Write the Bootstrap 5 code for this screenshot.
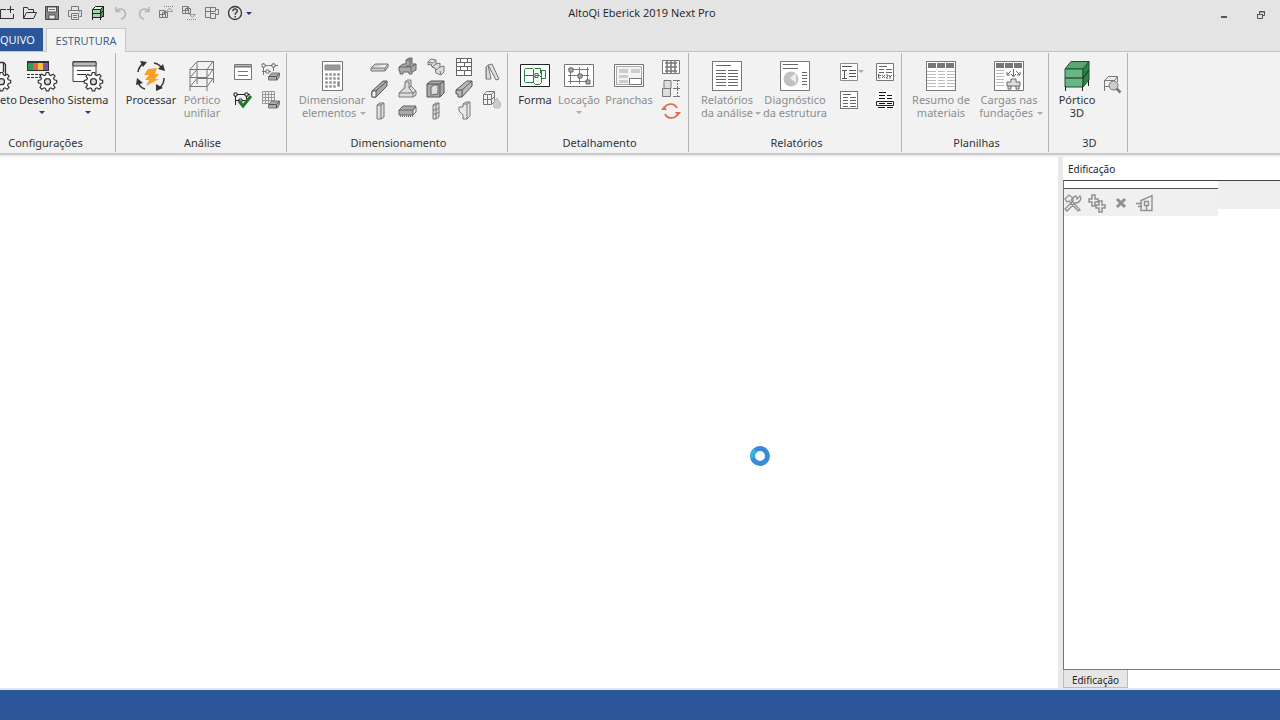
<!DOCTYPE html>
<html lang="pt-BR">
<head>
<meta charset="utf-8">
<meta name="viewport" content="width=device-width, initial-scale=1">
<title>AltoQi Eberick 2019 Next Pro</title>
<link href="https://cdn.jsdelivr.net/npm/bootstrap@5.3.0/dist/css/bootstrap.min.css" rel="stylesheet">
<style>
body{font:11px/13px "Noto Sans","Open Sans",sans-serif;color:#333;background:#fff}
button{background:none;border:0;padding:0;color:inherit;font:inherit}
svg{display:block;fill:none;stroke:currentColor;stroke-width:1}
.app-head{background:#e4e4e4}
.title-row{height:28px;color:#333}
.app-title{top:6px;padding-left:4px;font:11px/14px "Open Sans",sans-serif;color:#222}
.quick{gap:7px;margin-left:-2px;padding-top:5px}
.quick button,.quick svg{width:16px;height:16px}
.quick .caret-btn{width:8px;margin-left:-5px}
.win-tools{gap:22px;padding:4px 12px 0 0}
.tab-row{height:24px;font:11px/22px "Open Sans",sans-serif;border-bottom:1px solid #c4c4c4}
.tab-file{background:#2b579a;color:#fff;width:43px;text-align:left}
.tab-on{background:#f3f3f3;color:#3e5688;width:80px;height:24px;margin-left:3px;border:1px solid #c8c8c8;border-bottom:0}
.ribbon{background:#f2f2f2;height:103px;border-bottom:2px solid #cacaca;padding-top:1px}
.rgroup{height:99px;border-right:1px solid #b4b4b4;flex:none}
.rbody{height:83px;padding-top:5px;display:flex;align-items:flex-start}
.rlabel{text-align:center;line-height:14px;padding-left:3px;color:#333}
.g-cfg{width:116px}
.g-cfg .rlabel{padding-right:27px}
.g-ana{width:171px}.g-ana .rbody{padding-left:7px}
.g-dim{width:221px}.g-dim .rbody{padding-left:11px}
.g-det{width:181px}.g-det .rbody{padding-left:5px}
.g-rel{width:213px}.g-rel .rbody{padding-left:4px}
.g-pla{width:147px}.g-pla .rbody{padding-left:5px}
.g-3d{width:79px}.g-3d .rbody{padding-left:6px}
.big{padding-top:2px;color:#333;text-align:center;position:relative;display:flex;flex-direction:column;align-items:center;white-space:nowrap;flex:none}
.big svg{width:32px;height:32px;margin-bottom:1px}
.big:disabled,.tiny:disabled{color:#8d8d8d}
.w-a{width:46px}.w-b{width:56px}.w-c{width:68px}.w-d{width:44px}
.w-cut{width:19px;align-items:flex-start}
.w-cut svg{width:16px}
.caret{width:0;height:0;border:3px solid transparent;border-top-color:#233a70;border-bottom:0;display:block;margin:5px auto 0}
:disabled .caret{border-top-color:#aaa}
.caret.side{position:absolute;right:0;bottom:4px;margin:0}
.stack2,.stack3{display:grid;align-content:start;grid-auto-flow:column;grid-auto-columns:28px;flex:none}
.stack2{grid-template-rows:28px 28px}
.stack3{grid-template-rows:22px 22px 22px;margin-top:-2px}
.rel-tools{margin-left:6px;column-gap:8px}
.tiny{display:flex;align-items:center;justify-content:center;position:relative;color:#777}
.tiny svg{width:20px;height:20px}
.tiny .caret{position:absolute;right:-1px;top:12px;margin:0}
.crisp{shape-rendering:crispEdges}
.work{border-top:2px solid #eee;border-bottom:2px solid #e2e4ea}
.canvas-area{background:#fff}
.side-panel{width:222px;border-left:5px solid #e9e9e9;font:10px/14px "Noto Sans",sans-serif;color:#222}
.side-title{padding:5px 5px 4px}
.side-body{border:1px solid #777;border-top-color:#444;border-right:0}
.side-tools{width:154px;border-top:1px solid #555;margin-top:7px;height:28px;background:#f0f0f0;color:#909090;gap:4px}
.side-tools button,.side-tools svg{width:20px;height:20px}
.side-rest{height:28px;background:#efefef}
.side-tab{background:#e6e6e6;border:1px solid #bbb;border-top:0;width:65px;height:18px;padding-top:3px;color:#222}
.foot{background:#2b579a;height:30px}
.busy{left:58.6%;top:54.2%;width:22px;height:22px}
</style>
</head>
<body>
<div class="vh-100 d-flex flex-column overflow-hidden">
<header class="app-head">
<div class="title-row d-flex justify-content-between position-relative">
<div class="quick d-flex">
<button aria-label="Novo"><svg viewBox="0 0 16 16"><path d="M2.500 13V4.500H8M15.500 9v4.500H2M12.500 1v7M9 4.500h7" stroke="#333"/></svg></button>
<button aria-label="Abrir"><svg viewBox="0 0 16 16"><path d="M2.500 13.500v-11h4l1 2h5v3M2.500 13.500l3-6h10l-3 6z" stroke="#333"/></svg></button>
<button aria-label="Salvar"><svg viewBox="0 0 16 16"><path d="M1.500 1.500h13v13h-13z" stroke="#444" fill="#888"/><path d="M3.500 2h9v5h-9zM5 10h6v4H5z" fill="#eee" stroke="#555"/><path d="M5 4.500h6" stroke="#777"/></svg></button>
<button aria-label="Imprimir"><svg viewBox="0 0 16 16"><path d="M4.500 5V1.500h7V5M3.500 11.500h-2v-6h13v6h-2M4.500 8.500h7v6h-7zM6 10.500h4M6 12.500h4M12 7h1" stroke="#777"/></svg></button>
<button aria-label="Pórtico 3D"><svg viewBox="0 0 16 16"><path d="M2.500 4.500l3-3h8l-3 3z" fill="#d8f0d8" stroke="#222"/><path d="M2.500 4.500h8v8h-8z" fill="#a5d6a9" stroke="#222"/><path d="M10.500 4.500l3-3v9l-3 3z" fill="#57965f" stroke="#222"/><path d="M2.500 8.500h8l3-3M2.500 12v3M10.500 12v3M13.500 10v2" stroke="#222"/></svg></button>
<button aria-label="Desfazer" disabled><svg viewBox="0 0 16 16"><path d="M3 2v4.500h4.500M3.500 6a5 5 0 1 1 4.500 8" stroke="#b4b4b4" stroke-width="1.600"/></svg></button>
<button aria-label="Refazer" disabled><svg viewBox="0 0 16 16"><path d="M13 2v4.500H8.500M12.500 6A5 5 0 1 0 8 14" stroke="#b4b4b4" stroke-width="1.600"/></svg></button>
<button aria-label="Pavimento acima"><svg viewBox="0 0 16 16"><path d="M.5 5.500h5v4h-5zM3.500 7.500h5v5h-5zM.5 9.500v3h3M6.500 5.500v7" stroke="#777"/><path d="M7.500 6.500h6L10.500 3z" stroke="#999"/><path d="M5 1.500h9" stroke="#888" stroke-dasharray="1 1"/></svg></button>
<button aria-label="Pavimento abaixo"><svg viewBox="0 0 16 16"><path d="M.5 1.500h5v4h-5zM3.500 3.500h5v5h-5zM.5 5.500v3h3M6.500 1.500v7" stroke="#777"/><path d="M7.500 9.500h6L10.500 12.500z" stroke="#999"/><path d="M5 14.500h9" stroke="#888" stroke-dasharray="1 1"/></svg></button>
<button aria-label="Croqui"><svg viewBox="0 0 16 16"><path d="M.5 2.500h5v4h-5zM5.500 2.500h5v4h-5zM.5 6.500h5v6h-5zM5.500 8.500h5v5h-5zM10.500 4.500h3v5h-3" stroke="#777"/></svg></button>
<button aria-label="Ajuda"><svg viewBox="0 0 16 16"><circle cx="7" cy="8" r="6.500" stroke="#333" stroke-width="1.300"/><path d="M5 6.200c0-3 4.300-3 4.300-.2C9.300 7.600 7.200 7.600 7.200 9.700M7.200 11v1.400" stroke="#333" stroke-width="1.400"/></svg></button>
<button class="caret-btn" aria-label="Personalizar"><span class="caret m-0"></span></button>
</div>
<div class="app-title position-absolute start-0 end-0 text-center">AltoQi Eberick 2019 Next Pro</div>
<div class="win-tools d-flex">
<button aria-label="Minimizar"><svg width="16" height="16" viewBox="0 0 16 16"><path d="M5 9h6" stroke="#555" stroke-width="2"/></svg></button>
<button aria-label="Restaurar"><svg width="14" height="16" viewBox="0 0 14 16"><path d="M3.500 6.500h5v4h-5zM5.500 6V3.500h5v4H9M3 6.500h6M5 4h6" stroke="#555"/></svg></button>
</div>
</div>
<nav class="tab-row d-flex"><button class="tab-file" aria-label="Arquivo">QUIVO</button><button class="tab-on">ESTRUTURA</button></nav>
</header>

<section class="ribbon d-flex" aria-label="Estrutura">
<div class="rgroup g-cfg"><div class="rbody">
<button class="big w-cut" aria-label="Projeto"><svg viewBox="16 0 16 32"><path d="M16 2.500h3.500l2 2V15M19.500 3v9" stroke="#333" stroke-width="1.300"/><use href="#gear" x="-4"/></svg>eto</button>
<button class="big w-a"><svg viewBox="0 0 32 32">
<path d="M1 1h22v10H1z" fill="#333" stroke="none"/><path d="M2 3h5v7H2z" fill="#2c9a61" stroke="none"/><path d="M7 3h5v7H7z" fill="#e76337" stroke="none"/><path d="M12 3h5v7h-5z" fill="#f2c43d" stroke="none"/><path d="M17 3h5v7h-5z" fill="#864ea0" stroke="none"/><path d="M1 14.500h15M1 17.500h13" stroke="#333" stroke-dasharray="3 1"/>
<g id="gear"><path d="M19.500 15l.8-2.500h2.400l.8 2.500 1.500.6 2.200-1.400 1.800 1.800-1.400 2.200.6 1.500 2.500.8v2.400l-2.500.8-.6 1.500 1.400 2.200-1.800 1.800-2.200-1.400-1.500.6-.8 2.500h-2.400l-.8-2.500-1.500-.6-2.200 1.400-1.800-1.800 1.400-2.200-.6-1.500-2.500-.8v-2.400l2.500-.8.6-1.500-1.400-2.200 1.800-1.800 2.200 1.400z" fill="#fff" stroke="#333" stroke-width="1.200"/><circle cx="21.500" cy="21.700" r="3" fill="#ddd" stroke="#333" stroke-width="1.300"/></g></svg>Desenho<span class="caret"></span></button>
<button class="big w-a"><svg viewBox="0 0 32 32"><path d="M1 1.500h23v20H1z" fill="#fff" stroke="#444"/><path d="M1 2h23v4H1z" fill="#bbb" stroke="#444"/><path d="M5 10.500h14M5 14.500h9" stroke="#333"/><use href="#gear"/></svg>Sistema<span class="caret"></span></button>
</div><div class="rlabel">Configurações</div></div>

<div class="rgroup g-ana"><div class="rbody">
<button class="big w-b"><svg viewBox="0 0 32 32"><path d="M13 9l9-1-2 6h4l-4 5h4l-13 7 3-6H10l4-5H9z" fill="#f8a126" stroke="none"/><path d="M3 12q1-6 6-9M19 3q6 1 8 6M29 18q0 7-5 10M10 29q-5-1-7-7" stroke="#333" stroke-width="1.500"/><path d="M5 1l7 1-4 5zM28 4l2 7-7-2zM21 24v7l7-3zM1 25l1-7 6 5z" fill="#333" stroke="none"/></svg>Processar</button>
<button class="big w-a" disabled><svg viewBox="0 0 32 32"><path d="M4 9.500h17l6-8H11zM4 9v22M21 9v22M27.500 1v22M11 2v22M4 17.500h17l6-8H11zM4 26.500h17l6-8H11z" stroke="#777"/></svg>Pórtico<br>unifilar</button>
<div class="stack2 ms-1">
<button class="tiny" aria-label="Janela de análise"><svg viewBox="0 0 20 20"><path d="M1.500 2.500h17v15h-17z" fill="#fff"/><path d="M2 4.500h16" stroke-width="2"/><path d="M5 9.500h10M5 13.500h10"/></svg></button>
<button class="tiny" aria-label="Verificar lançamento"><svg viewBox="0 0 20 20"><path d="M2.500 3v12M13.500 3v7M2 4.500h15M2 10.500h12" stroke="#222"/><path d="M1 3h3v3H1zM12 3h3v3h-3zM6 9h3v3H6z" fill="#fff" stroke="#222"/><path d="M6 11l4 5 8-10" stroke="#20762a" stroke-width="3"/></svg></button>
<button class="tiny" aria-label="Apagar elementos"><svg viewBox="0 0 20 20"><path d="M2.500 1v12M12.500 1v8M1 3.500h16M1 9.500h9"/><path d="M1 2h3v3H1zM11 2h3v3h-3zM5 8h3v3H5z" fill="#fff"/><g id="er"><path d="M7.500 15l3-4h8v3l-2 4h-9z" fill="#aaa"/><path d="M7.500 14.500h8l3-3.500M15.500 15v3" stroke="#555"/></g></svg></button>
<button class="tiny" aria-label="Apagar grelha"><svg viewBox="0 0 20 20"><path d="M1.500 1.500h12v12h-12zM4.500 1v12M7.500 1v12M10.500 1v12M1 4.500h12M1 7.500h12M1 10.500h12" stroke="#999"/><use href="#er"/></svg></button>
</div></div><div class="rlabel">Análise</div></div>

<div class="rgroup g-dim"><div class="rbody">
<button class="big w-c" disabled><svg viewBox="0 0 32 32"><path d="M6.500 1.500h20v29h-20z" fill="#fff" stroke="#777"/><path d="M9 5h15v5H9z" fill="#999"/><path d="M9 13h3v3H9zM13 13h3v3h-3zM17 13h3v3h-3zM21 13h3v3h-3zM9 17h3v3H9zM13 17h3v3h-3zM17 17h3v3h-3zM21 17h3v3h-3zM9 21h3v3H9zM13 21h3v3h-3zM17 21h3v3h-3zM21 21h3v6h-3zM9 25h3v3H9zM13 25h3v3h-3zM17 25h3v3h-3z" fill="#888" stroke="#fff" stroke-width=".6"/></svg>Dimensionar<br><span>elementos &nbsp;</span><span class="caret side"></span></button>
<div class="stack3">
<button class="tiny" aria-label="Lajes"><svg viewBox="0 0 20 20"><path d="M1 11l4-4h13l-3 4zM1 11v3h14l3-4V7M15 11v3" fill="#ccc"/></svg></button>
<button class="tiny" aria-label="Vigas"><svg viewBox="0 0 20 20"><path d="M2 12L13 2h4v5L6 18H2z" fill="#aaa" stroke="#555"/><path d="M2 12h4v6H2z" fill="#fff" stroke="#555"/><path d="M6 12L17 2" stroke="#555"/></svg></button>
<button class="tiny" aria-label="Pilares"><svg viewBox="0 0 20 20"><path d="M7 4l3-2h4v14l-3 2H7zM7 4h4v14M11 4l3-2" fill="#ddd"/></svg></button>
<button class="tiny" aria-label="Blocos"><svg viewBox="0 0 20 20"><path d="M1 10l4-3h3V3l3-2h3v6h4v6l-4 2v2h-3v-2H5v2H2v-3H1zM1 10h12v5M13 10l5-3M8 3h4v6H8M12 3l2-2" fill="#aaa" stroke="#666"/></svg></button>
<button class="tiny" aria-label="Sapatas"><svg viewBox="0 0 20 20"><path d="M7 3l2-2h4v6l5 5v4l-3 2H1v-4l6-5zM7 3h4v6l4 5H1M15 14v4M11 9l2-2M15 14l3-2" fill="#ddd"/></svg></button>
<button class="tiny" aria-label="Radier"><svg viewBox="0 0 20 20"><path d="M1 9l4-4h13l-3 4v5H1z" fill="#aaa" stroke="#666"/><path d="M1 9h14l3-3v5l-3 3" stroke="#666"/><path d="M2 15h14" stroke="#777" stroke-width="2" stroke-dasharray="1 1"/></svg></button>
<button class="tiny" aria-label="Escadas"><svg viewBox="0 0 20 20"><path d="M2 5l3-3 5 1v4l4-1v4l4-1v6l-3 3-5-2-1-5-3-1-1-3-3 1zM2 5l5 1 3-3M6 10l4-3M10 13l4-3M15 18l-1-4" fill="#ddd"/></svg></button>
<button class="tiny" aria-label="Reservatórios"><svg viewBox="0 0 20 20"><path d="M1 5l4-3h13v12l-4 4H1z" fill="#aaa" stroke="#555"/><path d="M1 5h13v13M14 5l4-3" stroke="#555"/><path d="M5 16V8l3-2h4v9z" fill="#ddd" stroke="#666"/></svg></button>
<button class="tiny" aria-label="Pilar composto"><svg viewBox="0 0 20 20"><path d="M7 4l3-2h3v14l-3 2H7zM7 4h3v14M10 4l3-2M7 9h3l3-2M7 13h3l3-2" fill="#ddd"/></svg></button>
<button class="tiny" aria-label="Alvenaria"><svg viewBox="0 0 20 20" class="crisp"><path d="M2.500 1.500h15v17h-15zM3 5.500h14M3 9.500h14M3 13.500h14M6.500 2v3M13.500 2v3M10.500 6v3M6.500 10v3M13.500 10v3M10.500 14v4" fill="#fff" stroke="#666"/></svg></button>
<button class="tiny" aria-label="Vigas T"><svg viewBox="0 0 20 20"><path d="M2 11L13 2h5v5L8 18H4v-3H2zM2 11h6v7M8 11l10-9" fill="#bbb" stroke="#555"/></svg></button>
<button class="tiny" aria-label="Consolos"><svg viewBox="0 0 20 20"><path d="M9 3l3-2h4v14l-3 3H9v-4l-4-4V6h4zM9 3h4v15M13 3l3-2" fill="#e7e7e7"/></svg></button>
</div>
<div class="stack2">
<button class="tiny" aria-label="Rampa"><svg viewBox="0 0 20 20"><path d="M6 3l4-1 7 15-3 1L6 3zM4 17V5l2-2 3 14z" fill="#ddd"/><path d="M4.500 5v12" stroke-dasharray="1 1"/></svg></button>
<button class="tiny" aria-label="Incêndio"><svg viewBox="0 0 20 20"><path d="M1.500 4.500h8v10h-8zM1.500 9.500h8l3-3M5.500 4.500v10M1.500 4.500l3-3h8l-3 3M12.500 1.500v10l-3 3"/><path d="M15 8q6 7 2 10h-4q-4-3 2-10z" fill="#ccc" stroke="#bbb"/></svg></button>
</div></div><div class="rlabel">Dimensionamento</div></div>

<div class="rgroup g-det"><div class="rbody">
<button class="big w-d"><svg viewBox="0 0 32 32"><path d="M1.500 4.500h29v22h-29z" fill="#fff" stroke="#222"/><path d="M6.500 8.500h7l1 1v6h-9v-6zM15.500 8.500h6v5M5.500 15.500h9v7h-8l-1-1zM14.500 17.500l2-2h4l2 2v5l-2 2h-4l-2-2zM22.500 10.500h4v8h-4zM14.500 9.500v5M16 13.500h3v4h-3z" stroke="#23823a"/></svg>Forma</button>
<button class="big w-d" disabled><svg viewBox="0 0 32 32"><path d="M1.500 4.500h29v22h-29z" fill="#fff" stroke="#777"/><path d="M7.500 7v17M16.500 7v17M24.500 7v17M5 9.500h21M5 15.500h21M5 21.500h21" stroke="#777"/><path d="M6 8h4v4H6zM15 14h4v4h-4zM23 20h4v4h-4z" fill="#aaa" stroke="#666"/></svg>Locação<span class="caret"></span></button>
<button class="big w-b" disabled><svg viewBox="0 0 32 32"><path d="M1.500 4.500h29v22h-29z" fill="#fff" stroke="#777"/><path d="M3.500 6.500h25v18h-25z" fill="#f3f3f3" stroke="#aaa"/><path d="M6 9h9v4H6zM18 9h9v4h-9zM6 15h9v3H6zM6 20h9v3H6z" fill="#ccc" stroke="none"/><path d="M16.500 18.500h12v6h-12z" fill="#fff" stroke="#777"/></svg>Pranchas</button>
<div class="stack3">
<button class="tiny" aria-label="Armadura"><svg viewBox="0 0 20 20"><path d="M1.500 3.500h17v13h-17z" fill="#fff"/><path d="M4 6h12M4 10h12M4 14h12M6 4v12M10 4v12M14 4v12"/><path d="M5 5h2v2H5zM9 5h2v2H9zM13 5h2v2h-2zM5 9h2v2H5zM9 9h2v2H9zM13 9h2v2h-2zM5 13h2v2H5zM9 13h2v2H9zM13 13h2v2h-2z"/></svg></button>
<button class="tiny" aria-label="Cotas"><svg viewBox="0 0 20 20"><path d="M3 1.500h7v8H3zM1.500 9.500h8v8h-8z" fill="#ddd"/><path d="M12 1.500h7M12 9.500h7M12 17.500h7"/><path d="M16.500 1v17" stroke-dasharray="2 1"/></svg></button>
<button class="tiny" aria-label="Atualizar"><svg viewBox="0 0 20 20"><path d="M3 8a7 7 0 0 1 13-1M17 12a7 7 0 0 1-13 1" stroke="#dc7254" stroke-width="1.800"/><path d="M0 9h6L3 5zM14 11h6l-3 4z" fill="#dc7254" stroke="none"/></svg></button>
</div></div><div class="rlabel">Detalhamento</div></div>

<div class="rgroup g-rel"><div class="rbody">
<button class="big w-c" disabled><svg viewBox="0 0 32 32" class="crisp"><path d="M1.500 1.500h29v29h-29z" fill="#fff" stroke="#777"/><path d="M5 5.500h15M5 10.500h10M5 13.500h10M5 16.500h10M5 19.500h10M5 22.500h10M5 25.500h10M17 10.500h10M17 13.500h10M17 16.500h10M17 19.500h10M17 22.500h10M17 25.500h10" stroke="#666"/></svg>Relatórios<br><span>da análise</span><span class="caret side"></span></button>
<button class="big w-c" disabled><svg viewBox="0 0 32 32"><path d="M1.500 1.500h29v29h-29z" fill="#fff" stroke="#777"/><path d="M4 4.500h15M4 8.500h15M23 12.500h5M23 15.500h5M23 18.500h5M23 21.500h5M23 24.500h5" stroke="#666"/><circle cx="12" cy="19" r="7.500" fill="#c2c2c2" stroke="none"/><path d="M11 18l6-5v10z" fill="#eee" stroke="none"/></svg>Diagnóstico<br>da estrutura</button>
<div class="stack2 rel-tools">
<button class="tiny" aria-label="Relatório de texto" disabled><svg viewBox="0 0 20 20"><path d="M1.500 1.500h17v17h-17z" fill="#fff"/><path d="M3 4.500h10M3 8.500h5M5.500 9v7M3 16.500h5M10 8.500h7M10 11.500h7M10 14.500h7" stroke="#555"/></svg><span class="caret"></span></button>
<button class="tiny" aria-label="Relatório em colunas"><svg viewBox="0 0 20 20" class="crisp"><path d="M1.500 1.500h17v17h-17z" fill="#fff"/><path d="M4 4.500h8M4 7.500h5M4 10.500h5M4 13.500h5M4 16.500h5M11 7.500h6M11 10.500h6M11 13.500h6M11 16.500h6" stroke="#666"/></svg></button>
<button class="tiny" aria-label="Relatório de cálculo"><svg viewBox="0 0 20 20"><path d="M1.500 1.500h17v17h-17z" fill="#fff"/><path d="M4 4.500h8M4 7.500h5M11 7.500h6M4 10.500h5M11 10.500h6M3.500 12v4h2M3 13.500h3M7 13l3 3M10 13l-3 3M11 13h2v1l-2 2h2M14 13l1 2 2-2M15 15v2" stroke="#666"/></svg></button>
<button class="tiny" aria-label="Relatório resumido"><svg viewBox="0 0 20 20"><path d="M1 1h18v18H1z" fill="#fff" stroke="none"/><path d="M4 2.500h7M4 5.500h6M4 8.500h6M12 5.500h5M12 8.500h5M4 13.500h6M12 13.500h5M3 17.500h7M12 17.500h6" stroke="#111"/><path d="M1.500 11.500h17v4h-17z" stroke="#222"/></svg></button>
</div></div><div class="rlabel">Relatórios</div></div>

<div class="rgroup g-pla"><div class="rbody">
<button class="big w-c" disabled><svg viewBox="0 0 32 32" class="crisp"><path d="M1.500 1.500h29v29h-29z" fill="#fff" stroke="#777"/><path d="M3 5.500h8M12 5.500h8M21 5.500h8" stroke="#777" stroke-width="5"/><path d="M2 11.500h28M2 14.500h28M2 17.500h28M2 20.500h28M2 23.500h28M2 26.500h28" stroke="#bbb"/><path d="M11.500 8v22M20.500 8v22" stroke="#fff" stroke-width="2"/></svg>Resumo de<br>materiais</button>
<button class="big w-c" disabled><svg viewBox="0 0 32 32"><path d="M1.500 1.500h29v29h-29z" fill="#fff" stroke="#777"/><path d="M3 5.500h8M12 5.500h8M21 5.500h8" stroke="#777" stroke-width="5"/><path d="M3 10.500h8M3 13.500h8M3 16.500h8M3 19.500h8M3 22.500h8M3 25.500h8" stroke="#bbb"/><path d="M20.500 9v7M18 14l2.500 3 2.500-3M18 11l-4 4M14 12v3h3M23 11l4 4M27 12v3h-3" stroke="#666"/><path d="M18 19h5v3h4v4H14v-4h4zM15 26v3h3v-3M23 26v3h3v-3" fill="#ddd" stroke="#666"/></svg>Cargas nas<br><span>fundações &nbsp;</span><span class="caret side"></span></button>
</div><div class="rlabel">Planilhas</div></div>

<div class="rgroup g-3d"><div class="rbody">
<button class="big w-d"><svg viewBox="0 0 32 32"><path d="M4 9l6-7.500h18L22 9z" fill="#59a873" stroke="#234f30"/><path d="M4 9h18v18H4z" fill="#68b681" stroke="#234f30"/><path d="M22 9l6-7.500V20l-6 7z" fill="#278548" stroke="#234f30"/><path d="M4 18h18l6-8M4.500 26v5M21.500 26v5M27.500 20v6" stroke="#222"/></svg>Pórtico<br>3D</button>
<div class="stack2"><button class="tiny mt-4" aria-label="Localizar no 3D"><svg viewBox="0 0 20 20"><path d="M1.500 6.500l4-4h9l-3 4zM1.500 6v11M11.500 6v3M14.500 3v5M2 12.500h6" fill="#eee"/><circle cx="10.500" cy="11.500" r="4.500" fill="#ccc"/><path d="M13.500 14.500l4 4" stroke-width="2.500"/></svg></button></div>
</div><div class="rlabel">3D</div></div>
</section>

<div class="work d-flex flex-grow-1 position-relative">
<main class="canvas-area flex-grow-1"><svg class="busy position-absolute" viewBox="0 0 22 22" role="img" aria-label="Carregando"><circle cx="10" cy="11" r="7.500" stroke="#378bdc" stroke-width="5"/><path d="M3 13a7.500 7.500 0 0 1 2-8" stroke="#35b3df" stroke-width="4"/></svg></main>
<aside class="side-panel d-flex flex-column">
<div class="side-title">Edificação</div>
<div class="side-body flex-grow-1 d-flex align-items-start">
<div class="side-tools d-flex align-items-center">
<button aria-label="Propriedades"><svg viewBox="0 0 20 20"><path d="M1 6l4-4 4 3-2 2 9 10-2 1L5 8 3 9zM16 3l-3 3-1-3q-4 1-3 5l-8 8 2 2 8-8q5 0 6-5z" stroke-width="1.300"/></svg></button>
<button aria-label="Adicionar"><svg viewBox="0 0 20 20"><path d="M4 2h3v4h3v3H7v4H4V9H1V6h3zM11 8h3v4h3v3h-3v4h-3v-4H8v-3h3z" stroke-width="1.500"/></svg></button>
<button aria-label="Remover"><svg viewBox="0 0 20 20"><path d="M5 6l8 8M13 6l-8 8" stroke-width="3"/></svg></button>
<button aria-label="Abrir edificação"><svg viewBox="0 0 20 20"><path d="M5 17.500V7.500l11-5v15zM8.500 8.500h4v4h-4zM10.500 13v4M0 10.500h6M2 13.500h4" stroke-width="1.400"/></svg></button>
</div><div class="side-rest flex-grow-1"></div></div>
<button class="side-tab">Edificação</button>
</aside>
</div>
<footer class="foot"></footer>
</div>
<script src="https://cdn.jsdelivr.net/npm/bootstrap@5.3.0/dist/js/bootstrap.bundle.min.js"></script>
</body>
</html>
